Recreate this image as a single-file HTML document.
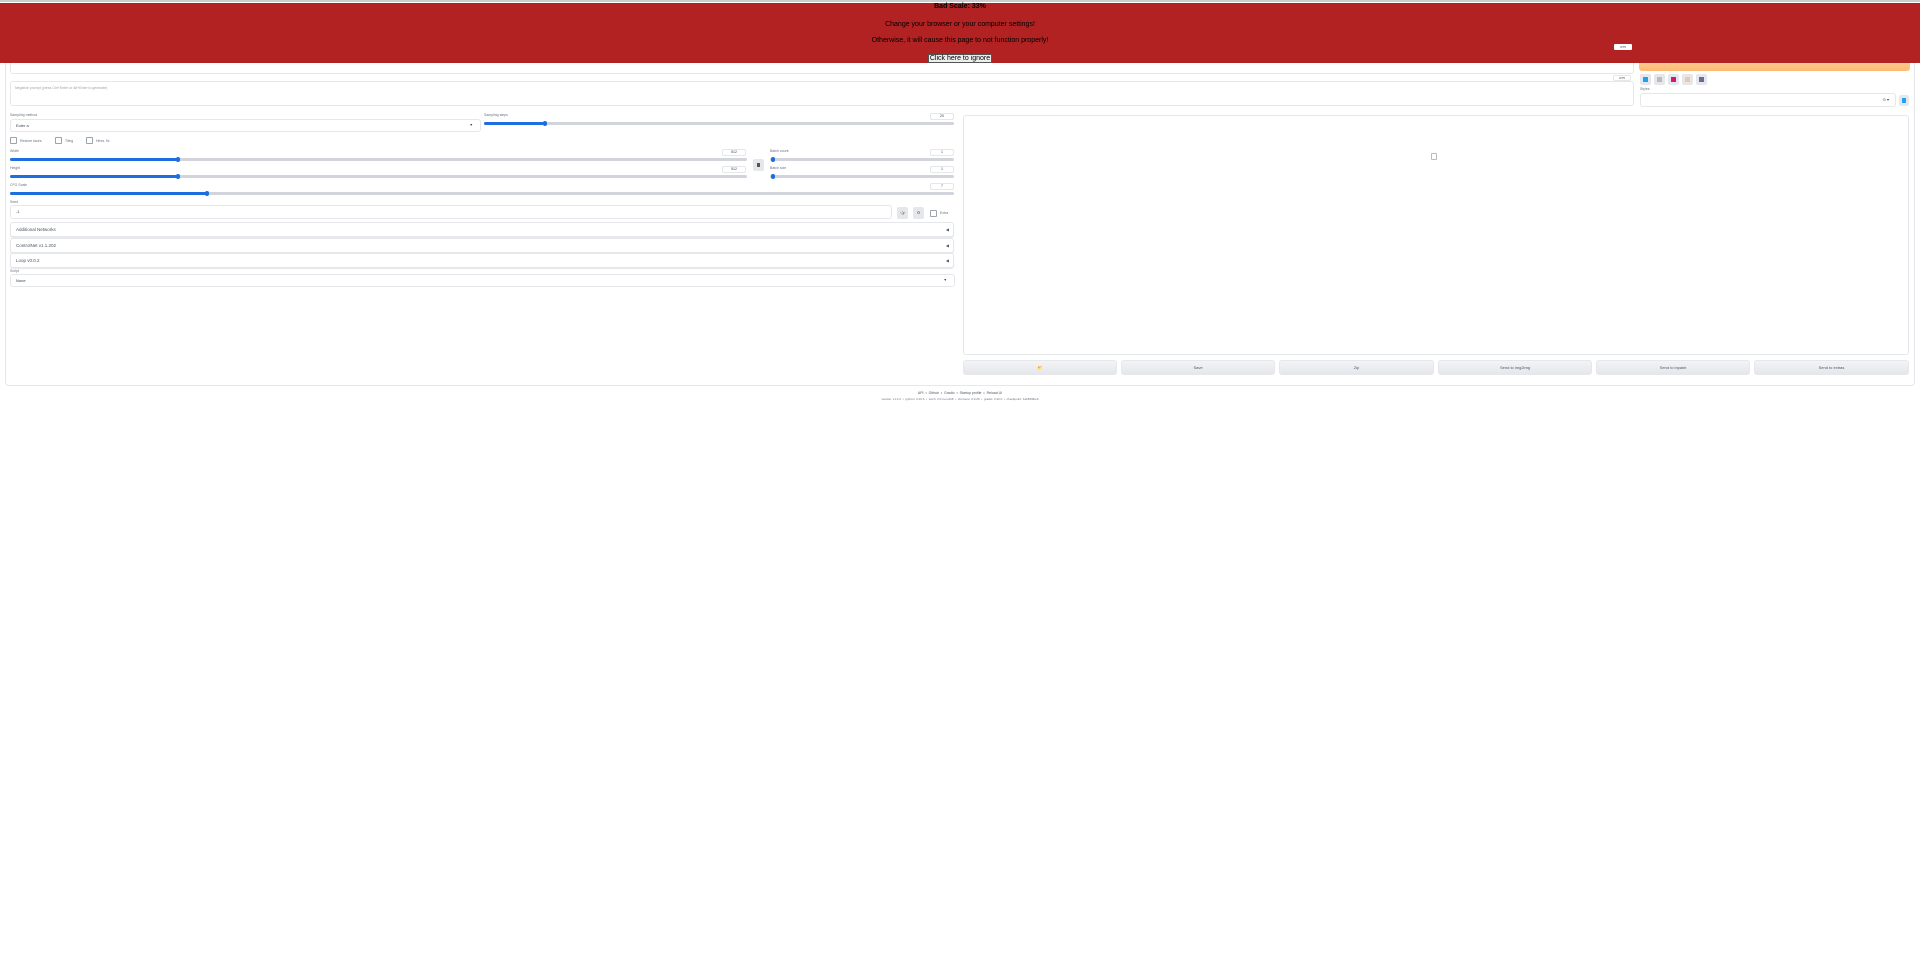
<!DOCTYPE html>
<html><head><meta charset="utf-8"><style>
*{box-sizing:border-box;margin:0;padding:0}
body{width:1920px;height:978px;background:#fff;font-family:"Liberation Sans",sans-serif;position:relative;overflow:hidden;color:#374151}
.a{position:absolute}
.box{position:absolute;border:1px solid #e5e7eb;border-radius:3px;background:#fff}
.lbl{position:absolute;font-size:3.5px;color:#6b7280}
.num{position:absolute;border:1px solid #e5e7eb;border-radius:2px;font-size:3.5px;text-align:center;line-height:5px;height:7px;width:24px;background:#fff}
.tr{position:absolute;height:3px;background:#d1d5db;border-radius:2px}
.fi{position:absolute;left:0;top:0;height:3px;background:#1d6fe0;border-radius:2px}
.th{position:absolute;top:-1px;width:4px;height:5px;background:#1d6fe0;border-radius:2px}
.cb{position:absolute;width:7px;height:7px;border:1px solid #9ca3af;border-radius:1px;background:#fff}
.acc{position:absolute;left:10px;width:944px;height:15px;border:1px solid #e5e7eb;border-radius:3px;background:#fff;font-size:4.5px;line-height:13px;padding-left:5px;color:#4b5563;box-shadow:0 1px 1px #e5e7eb}
.acc:after{content:"◀";position:absolute;right:4px;font-size:4px}
.btn{position:absolute;top:360px;height:15px;background:linear-gradient(#f3f4f6,#e5e7eb);border:1px solid #e5e7eb;border-radius:3px;font-size:4px;text-align:center;line-height:13px;color:#4b5563}
.tb{position:absolute;top:74px;width:11px;height:11px;border-radius:2px;background:#e5e7eb}
.tb i{position:absolute;left:3px;top:3px;width:5px;height:5px}
.bl{position:absolute;left:0;width:1920px;text-align:center;font-size:7px;line-height:8px;color:#000}
</style></head><body>
<div class="a" style="left:0;top:0;width:1920px;height:2px;background:#ccc"></div>
<div class="box" style="left:5px;top:55px;width:1910px;height:331px;border-radius:4px"></div>
<div class="box" style="left:10px;top:50px;width:1624px;height:24px"></div>
<div class="num" style="left:1613px;top:75px;width:18px;height:6px;font-size:3px;line-height:4px">0/75</div>
<div class="box" style="left:10px;top:81px;width:1624px;height:25px"><span style="position:absolute;left:4px;top:4px;font-size:3.5px;color:#9ca3af">Negative prompt (press Ctrl+Enter or Alt+Enter to generate)</span></div>
<div class="a" style="left:1639px;top:55px;width:271px;height:16px;background:linear-gradient(#ffd8a8,#fdba74);border-radius:3px"></div>
<div class="tb" style="left:1640px"><i style="background:#1da1f2"></i></div>
<div class="tb" style="left:1654px"><i style="background:#bbb"></i></div>
<div class="tb" style="left:1668px"><i style="background:#d6157a"></i></div>
<div class="tb" style="left:1682px"><i style="background:#e9c9a6"></i></div>
<div class="tb" style="left:1696px"><i style="background:#6b6b95"></i></div>
<div class="lbl" style="left:1640px;top:87px">Styles</div>
<div class="box" style="left:1640px;top:93px;width:256px;height:14px"><span style="position:absolute;right:6px;top:3px;font-size:4px">⊙ ▾</span></div>
<div class="a" style="left:1899px;top:95px;width:10px;height:11px;background:#e5e7eb;border-radius:2px"><i style="position:absolute;left:3px;top:3px;width:4px;height:5px;background:#1da1f2"></i></div>

<div class="lbl" style="left:10px;top:113px">Sampling method</div>
<div class="box" style="left:10px;top:119px;width:471px;height:13px;font-size:4px;line-height:11px;padding-left:5px">Euler a<span style="position:absolute;right:7px;font-size:3.5px">▼</span></div>
<div class="lbl" style="left:484px;top:113px">Sampling steps</div>
<div class="num" style="left:930px;top:113px">20</div>
<div class="tr" style="left:484px;top:122px;width:470px"><div class="fi" style="width:61px"></div><div class="th" style="left:59px"></div></div>

<div class="cb" style="left:10px;top:137px"></div><div class="lbl" style="left:20px;top:139px">Restore faces</div>
<div class="cb" style="left:55px;top:137px"></div><div class="lbl" style="left:65px;top:139px">Tiling</div>
<div class="cb" style="left:86px;top:137px"></div><div class="lbl" style="left:96px;top:139px">Hires. fix</div>

<div class="lbl" style="left:10px;top:149px">Width</div>
<div class="num" style="left:722px;top:149px">512</div>
<div class="tr" style="left:10px;top:158px;width:737px"><div class="fi" style="width:168px"></div><div class="th" style="left:166px"></div></div>
<div class="lbl" style="left:10px;top:166px">Height</div>
<div class="num" style="left:722px;top:166px">512</div>
<div class="tr" style="left:10px;top:175px;width:737px"><div class="fi" style="width:168px"></div><div class="th" style="left:166px"></div></div>
<div class="a" style="left:753px;top:159px;width:11px;height:12px;background:#e5e7eb;border-radius:2px"><i style="position:absolute;left:4px;top:4px;width:3px;height:4px;background:#555"></i></div>
<div class="lbl" style="left:770px;top:149px">Batch count</div>
<div class="num" style="left:930px;top:149px">1</div>
<div class="tr" style="left:770px;top:158px;width:184px"><div class="th" style="left:1px"></div></div>
<div class="lbl" style="left:770px;top:166px">Batch size</div>
<div class="num" style="left:930px;top:166px">1</div>
<div class="tr" style="left:770px;top:175px;width:184px"><div class="th" style="left:1px"></div></div>

<div class="lbl" style="left:10px;top:183px">CFG Scale</div>
<div class="num" style="left:930px;top:183px">7</div>
<div class="tr" style="left:10px;top:192px;width:944px"><div class="fi" style="width:197px"></div><div class="th" style="left:195px"></div></div>

<div class="lbl" style="left:10px;top:200px">Seed</div>
<div class="box" style="left:10px;top:205px;width:882px;height:14px;font-size:4px;line-height:12px;padding-left:5px">-1</div>
<div class="a" style="left:897px;top:207px;width:11px;height:12px;background:#e5e7eb;border-radius:2px;font-size:4px;text-align:center;line-height:12px">🎲</div>
<div class="a" style="left:913px;top:207px;width:11px;height:12px;background:#e5e7eb;border-radius:2px;font-size:4px;text-align:center;line-height:12px;color:#16a34a">♻</div>
<div class="cb" style="left:930px;top:210px"></div><div class="lbl" style="left:940px;top:211px">Extra</div>

<div class="acc" style="top:222px">Additional Networks</div>
<div class="acc" style="top:238px">ControlNet v1.1.202</div>
<div class="acc" style="top:253px">Loop v0.0.2</div>
<div class="lbl" style="left:10px;top:269px">Script</div>
<div class="box" style="left:10px;top:274px;width:945px;height:13px;font-size:4px;line-height:11px;padding-left:5px">None<span style="position:absolute;right:7px;font-size:3.5px">▼</span></div>

<div class="box" style="left:963px;top:115px;width:946px;height:240px"></div>
<div class="a" style="left:1431px;top:153px;width:6px;height:7px;border:1px solid #bbb;border-radius:1px"></div>
<div class="btn" style="left:963px;width:154px;color:#eab308">📂</div>
<div class="btn" style="left:1121px;width:154px">Save</div>
<div class="btn" style="left:1279px;width:155px">Zip</div>
<div class="btn" style="left:1438px;width:154px">Send to img2img</div>
<div class="btn" style="left:1596px;width:154px">Send to inpaint</div>
<div class="btn" style="left:1754px;width:155px">Send to extras</div>

<div class="a" style="left:0;top:391px;width:1920px;text-align:center;font-size:3.5px;color:#4b5563">API &nbsp;•&nbsp; Github &nbsp;•&nbsp; Gradio &nbsp;•&nbsp; Startup profile &nbsp;•&nbsp; Reload UI</div>
<div class="a" style="left:0;top:397px;width:1920px;text-align:center;font-size:3px;color:#6b7280">version: v1.4.0 &nbsp;•&nbsp; python: 3.10.6 &nbsp;•&nbsp; torch: 2.0.1+cu118 &nbsp;•&nbsp; xformers: 0.0.20 &nbsp;•&nbsp; gradio: 3.32.0 &nbsp;•&nbsp; checkpoint: 1a189f0be6</div>

<div class="a" style="left:0;top:3px;width:1920px;height:60px;background:#b22222"></div>
<div class="bl" style="top:3px;font-weight:bold">Bad Scale: 33%</div>
<div class="bl" style="top:21px">Change your browser or your computer settings!</div>
<div class="bl" style="top:37px">Otherwise, it will cause this page to not function properly!</div>
<div class="a" style="left:928px;top:54px;width:64px;height:9px;font-size:7px;line-height:8px;text-align:center;background:#eee;border:1px solid #555;color:#000">Click here to ignore</div>
<div class="a" style="left:1614px;top:44px;width:18px;height:6px;background:#fff;border-radius:1px;font-size:3px;text-align:center;line-height:6px">0/75</div>
</body></html>
